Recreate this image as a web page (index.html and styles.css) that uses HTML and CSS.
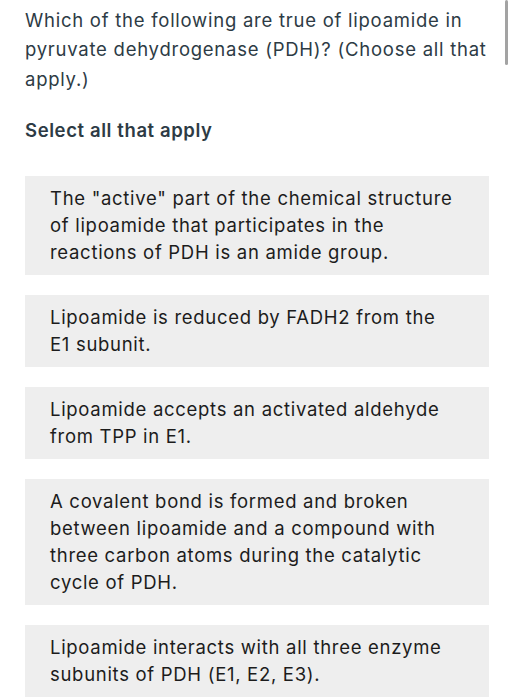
FILE: index.html
```html
<!DOCTYPE html>
<html lang="en">
<head>
<meta charset="utf-8">
<title>Question</title>
<link rel="stylesheet" href="styles.css">
</head>
<body>
<div class="scrollbar"></div>
<main class="page">
  <p class="question">Which of the following are true of lipoamide in pyruvate dehydrogenase (PDH)? (Choose all that apply.)</p>
  <h2 class="instruction">Select all that apply</h2>
  <ul class="options">
    <li class="option">The "active" part of the chemical structure of lipoamide that participates in the reactions of PDH is an amide group.</li>
    <li class="option">Lipoamide is reduced by FADH2 from the E1 subunit.</li>
    <li class="option">Lipoamide accepts an activated aldehyde from TPP in E1.</li>
    <li class="option">A covalent bond is formed and broken between lipoamide and a compound with three carbon atoms during the catalytic cycle of PDH.</li>
    <li class="option">Lipoamide interacts with all three enzyme subunits of PDH (E1, E2, E3).</li>
  </ul>
</main>
</body>
</html>
```
FILE: styles.css
```css
html, body {
  margin: 0;
  padding: 0;
  background: #ffffff;
}
body {
  font-family: Inter, "Liberation Sans", Arial, sans-serif;
  -webkit-font-smoothing: antialiased;
}
.page {
  width: 464px;
  padding: 5.5px 0 0 25px;
}
.question {
  margin: 0;
  font-size: 18.5px;
  letter-spacing: 0.75px;
  line-height: 29.5px;
  color: #2d3b45;
}
.instruction {
  margin: 22px 0 0;
  font-size: 18.5px;
  letter-spacing: 0.6px;
  line-height: 28px;
  font-weight: 600;
  color: #2d3b45;
}
.options {
  list-style: none;
  margin: 31.5px 0 0;
  padding: 0;
  display: flex;
  flex-direction: column;
  gap: 20px;
}
.option {
  background: #eeeeee;
  padding: 9px 32px 9px 25px;
  font-size: 18.5px;
  letter-spacing: 0.7px;
  line-height: 27px;
  color: #1c1c1c;
}
.scrollbar {
  position: absolute;
  top: 0;
  left: 505px;
  width: 3px;
  height: 65px;
  border-radius: 2px;
  background: #a3a3a3;
}
```
